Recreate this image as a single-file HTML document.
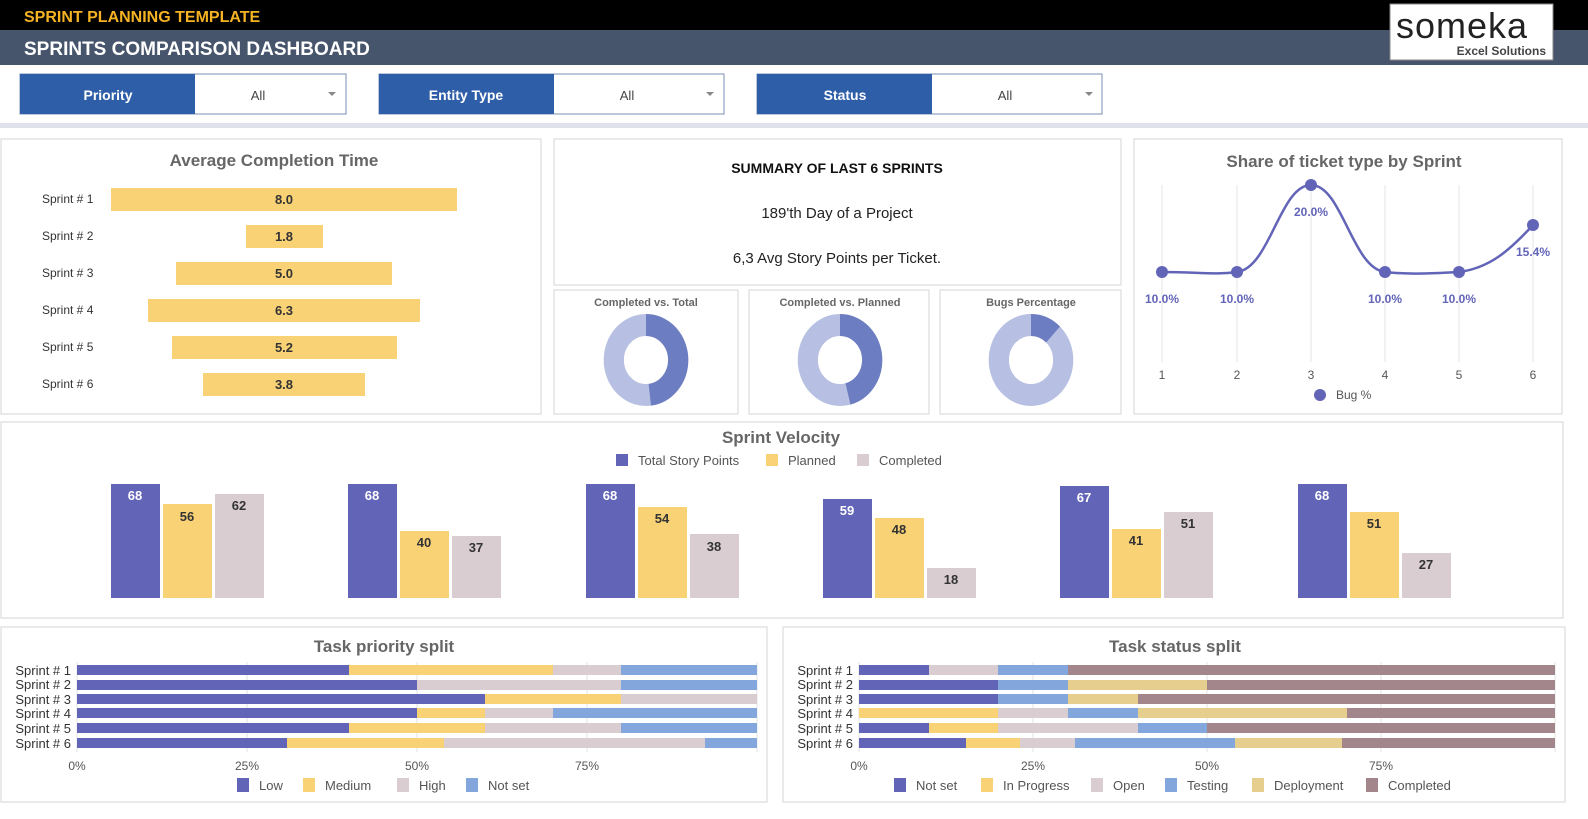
<!DOCTYPE html>
<html><head><meta charset="utf-8"><style>
body{margin:0;width:1588px;height:814px;background:#fff;overflow:hidden;font-family:"Liberation Sans",sans-serif}
svg text{font-family:"Liberation Sans",sans-serif}
</style></head><body>
<svg width="1588" height="814" viewBox="0 0 1588 814" xmlns="http://www.w3.org/2000/svg">
<rect x="0" y="0" width="1588" height="30" fill="#000"/>
<rect x="0" y="30" width="1588" height="35" fill="#46556c"/>
<text x="24" y="22" fill="#f5b324" font-size="16" font-weight="bold">SPRINT PLANNING TEMPLATE</text>
<text x="24" y="55" fill="#fff" font-size="19" font-weight="bold">SPRINTS COMPARISON DASHBOARD</text>
<rect x="1390" y="4" width="163" height="56" fill="#fff" stroke="#888"/>
<text x="1396" y="38" fill="#222" font-size="36" letter-spacing="1">someka</text>
<text x="1546" y="55" fill="#444" font-size="12" font-weight="bold" text-anchor="end">Excel Solutions</text>
<!-- filters -->
<g font-size="14">
<rect x="20" y="74" width="326" height="40" fill="#fff" stroke="#7b8fb8"/><rect x="20" y="74" width="175" height="40" fill="#2f5ea8"/>
<text x="108" y="100" fill="#fff" font-weight="bold" text-anchor="middle">Priority</text><text x="258" y="100" fill="#444" font-size="13" text-anchor="middle">All</text><path d="M328 92l4 4 4-4z" fill="#888"/>
<rect x="379" y="74" width="345" height="40" fill="#fff" stroke="#7b8fb8"/><rect x="379" y="74" width="175" height="40" fill="#2f5ea8"/>
<text x="466" y="100" fill="#fff" font-weight="bold" text-anchor="middle">Entity Type</text><text x="627" y="100" fill="#444" font-size="13" text-anchor="middle">All</text><path d="M706 92l4 4 4-4z" fill="#888"/>
<rect x="757" y="74" width="345" height="40" fill="#fff" stroke="#7b8fb8"/><rect x="757" y="74" width="175" height="40" fill="#2f5ea8"/>
<text x="845" y="100" fill="#fff" font-weight="bold" text-anchor="middle">Status</text><text x="1005" y="100" fill="#444" font-size="13" text-anchor="middle">All</text><path d="M1085 92l4 4 4-4z" fill="#888"/>
</g>
<rect x="0" y="123" width="1588" height="5" fill="#dfe2ea"/>
<!-- panels -->
<g fill="#fff" stroke="#d6d6d6">
<rect x="1" y="139" width="540" height="275"/><rect x="554" y="139" width="567" height="146"/>
<rect x="554" y="290" width="184" height="124"/><rect x="749" y="290" width="180" height="124"/><rect x="940" y="290" width="181" height="124"/>
<rect x="1134" y="139" width="428" height="275"/><rect x="1" y="422" width="1562" height="196"/>
<rect x="1" y="627" width="766" height="175"/><rect x="783" y="627" width="782" height="175"/>
</g>
<!-- avg completion -->
<text x="274" y="166" fill="#666" font-size="17" font-weight="bold" text-anchor="middle">Average Completion Time</text>
<g font-size="12" fill="#333">
<text x="42" y="203">Sprint # 1</text><text x="42" y="240">Sprint # 2</text><text x="42" y="277">Sprint # 3</text><text x="42" y="314">Sprint # 4</text><text x="42" y="351">Sprint # 5</text><text x="42" y="388">Sprint # 6</text>
</g>
<g fill="#f9d276">
<rect x="111" y="188" width="346" height="23"/><rect x="246" y="225" width="77" height="23"/><rect x="176" y="262" width="216" height="23"/>
<rect x="148" y="299" width="272" height="23"/><rect x="172" y="336" width="225" height="23"/><rect x="203" y="373" width="162" height="23"/>
</g>
<g font-size="13" font-weight="bold" fill="#333" text-anchor="middle">
<text x="284" y="204">8.0</text><text x="284" y="241">1.8</text><text x="284" y="278">5.0</text><text x="284" y="315">6.3</text><text x="284" y="352">5.2</text><text x="284" y="389">3.8</text>
</g>
<!-- summary -->
<text x="837" y="173" font-size="14" font-weight="bold" fill="#111" text-anchor="middle">SUMMARY OF LAST 6 SPRINTS</text>
<text x="837" y="218" font-size="15" fill="#222" text-anchor="middle">189'th Day of a Project</text>
<text x="837" y="263" font-size="15" fill="#222" text-anchor="middle">6,3 Avg Story Points per Ticket.</text>
<g font-size="11" font-weight="bold" fill="#666" text-anchor="middle">
<text x="646" y="306">Completed vs. Total</text><text x="840" y="306">Completed vs. Planned</text><text x="1031" y="306">Bugs Percentage</text>
</g>
<g fill="none" stroke-width="22">
<g transform="translate(646,360) scale(0.92,1) rotate(-90)"><circle r="35" stroke="#b7c0e2"/><circle r="35" stroke="#6d7dc1" stroke-dasharray="105.6 300"/></g>
<g transform="translate(840,360) scale(0.92,1) rotate(-90)"><circle r="35" stroke="#b7c0e2"/><circle r="35" stroke="#6d7dc1" stroke-dasharray="101 300"/></g>
<g transform="translate(1031,360) scale(0.92,1) rotate(-90)"><circle r="35" stroke="#b7c0e2"/><circle r="35" stroke="#6d7dc1" stroke-dasharray="26.4 300"/></g>
</g>
<!-- line chart -->
<text x="1344" y="167" fill="#666" font-size="17" font-weight="bold" text-anchor="middle">Share of ticket type by Sprint</text>
<g stroke="#e6e6e6"><path d="M1162 185V362M1237 185V362M1311 185V362M1385 185V362M1459 185V362M1533 185V362"/></g>
<path d="M1162 272C1200 272 1215 275 1237 272C1270 268 1280 185 1311 185C1342 185 1352 268 1385 272C1410 275 1440 273 1459 272C1490 268 1510 250 1533 225" fill="none" stroke="#6264b8" stroke-width="2.5"/>
<g fill="#6264b8"><circle cx="1162" cy="272" r="6"/><circle cx="1237" cy="272" r="6"/><circle cx="1311" cy="185" r="6"/><circle cx="1385" cy="272" r="6"/><circle cx="1459" cy="272" r="6"/><circle cx="1533" cy="225" r="6"/><circle cx="1320" cy="395" r="6"/></g>
<g font-size="12" font-weight="bold" fill="#6264b8" text-anchor="middle">
<text x="1162" y="303">10.0%</text><text x="1237" y="303">10.0%</text><text x="1311" y="216">20.0%</text><text x="1385" y="303">10.0%</text><text x="1459" y="303">10.0%</text><text x="1533" y="256">15.4%</text>
</g>
<g font-size="12" fill="#555" text-anchor="middle"><text x="1162" y="379">1</text><text x="1237" y="379">2</text><text x="1311" y="379">3</text><text x="1385" y="379">4</text><text x="1459" y="379">5</text><text x="1533" y="379">6</text></g>
<text x="1336" y="399" font-size="12" fill="#555">Bug %</text>
<!-- velocity -->
<text x="781" y="443" fill="#666" font-size="17" font-weight="bold" text-anchor="middle">Sprint Velocity</text>
<g font-size="13" fill="#555">
<rect x="616" y="454" width="12" height="12" fill="#6264b8"/><text x="638" y="465">Total Story Points</text>
<rect x="766" y="454" width="12" height="12" fill="#f9d276"/><text x="788" y="465">Planned</text>
<rect x="857" y="454" width="12" height="12" fill="#d9cdd1"/><text x="879" y="465">Completed</text>
</g>
<g id="v" font-size="13" font-weight="bold" text-anchor="middle">
<rect x="111" y="484" width="49" height="114" fill="#6264b8"/><text x="135" y="500" fill="#fff">68</text>
<rect x="163" y="504" width="49" height="94" fill="#f9d276"/><text x="187" y="521" fill="#333">56</text>
<rect x="215" y="494" width="49" height="104" fill="#d9cdd1"/><text x="239" y="510" fill="#333">62</text>
<rect x="348" y="484" width="49" height="114" fill="#6264b8"/><text x="372" y="500" fill="#fff">68</text>
<rect x="400" y="531" width="49" height="67" fill="#f9d276"/><text x="424" y="547" fill="#333">40</text>
<rect x="452" y="536" width="49" height="62" fill="#d9cdd1"/><text x="476" y="552" fill="#333">37</text>
<rect x="586" y="484" width="49" height="114" fill="#6264b8"/><text x="610" y="500" fill="#fff">68</text>
<rect x="638" y="507" width="49" height="91" fill="#f9d276"/><text x="662" y="523" fill="#333">54</text>
<rect x="690" y="534" width="49" height="64" fill="#d9cdd1"/><text x="714" y="551" fill="#333">38</text>
<rect x="823" y="499" width="49" height="99" fill="#6264b8"/><text x="847" y="515" fill="#fff">59</text>
<rect x="875" y="518" width="49" height="80" fill="#f9d276"/><text x="899" y="534" fill="#333">48</text>
<rect x="927" y="568" width="49" height="30" fill="#d9cdd1"/><text x="951" y="584" fill="#333">18</text>
<rect x="1060" y="486" width="49" height="112" fill="#6264b8"/><text x="1084" y="502" fill="#fff">67</text>
<rect x="1112" y="529" width="49" height="69" fill="#f9d276"/><text x="1136" y="545" fill="#333">41</text>
<rect x="1164" y="512" width="49" height="86" fill="#d9cdd1"/><text x="1188" y="528" fill="#333">51</text>
<rect x="1298" y="484" width="49" height="114" fill="#6264b8"/><text x="1322" y="500" fill="#fff">68</text>
<rect x="1350" y="512" width="49" height="86" fill="#f9d276"/><text x="1374" y="528" fill="#333">51</text>
<rect x="1402" y="553" width="49" height="45" fill="#d9cdd1"/><text x="1426" y="569" fill="#333">27</text>
</g>
<!-- priority split -->
<text x="384" y="652" fill="#666" font-size="17" font-weight="bold" text-anchor="middle">Task priority split</text>
<g stroke="#e3e3e3"><path d="M77 662V752M247 662V752M417 662V752M587 662V752M757 662V752"/></g>
<g font-size="13" fill="#333" text-anchor="end">
<text x="71" y="675">Sprint # 1</text><text x="71" y="689">Sprint # 2</text><text x="71" y="704">Sprint # 3</text><text x="71" y="718">Sprint # 4</text><text x="71" y="733">Sprint # 5</text><text x="71" y="748">Sprint # 6</text>
<text x="1
" y="0"></text>
</g>
<g>
<rect x="77" y="665" width="272" height="10" fill="#6264b8"/><rect x="349" y="665" width="204" height="10" fill="#f9d276"/><rect x="553" y="665" width="68" height="10" fill="#d9cdd1"/><rect x="621" y="665" width="136" height="10" fill="#83a6dc"/>
<rect x="77" y="680" width="340" height="10" fill="#6264b8"/><rect x="417" y="680" width="204" height="10" fill="#d9cdd1"/><rect x="621" y="680" width="136" height="10" fill="#83a6dc"/>
<rect x="77" y="694" width="408" height="10" fill="#6264b8"/><rect x="485" y="694" width="136" height="10" fill="#f9d276"/><rect x="621" y="694" width="136" height="10" fill="#d9cdd1"/>
<rect x="77" y="708" width="340" height="10" fill="#6264b8"/><rect x="417" y="708" width="68" height="10" fill="#f9d276"/><rect x="485" y="708" width="68" height="10" fill="#d9cdd1"/><rect x="553" y="708" width="204" height="10" fill="#83a6dc"/>
<rect x="77" y="723" width="272" height="10" fill="#6264b8"/><rect x="349" y="723" width="136" height="10" fill="#f9d276"/><rect x="485" y="723" width="136" height="10" fill="#d9cdd1"/><rect x="621" y="723" width="136" height="10" fill="#83a6dc"/>
<rect x="77" y="738" width="210" height="10" fill="#6264b8"/><rect x="287" y="738" width="157" height="10" fill="#f9d276"/><rect x="444" y="738" width="261" height="10" fill="#d9cdd1"/><rect x="705" y="738" width="52" height="10" fill="#83a6dc"/>
</g>
<g font-size="12" fill="#555" text-anchor="middle"><text x="77" y="770">0%</text><text x="247" y="770">25%</text><text x="417" y="770">50%</text><text x="587" y="770">75%</text></g>
<g font-size="13" fill="#555">
<rect x="237" y="778" width="12" height="14" fill="#6264b8"/><text x="259" y="790">Low</text>
<rect x="303" y="778" width="12" height="14" fill="#f9d276"/><text x="325" y="790">Medium</text>
<rect x="397" y="778" width="12" height="14" fill="#d9cdd1"/><text x="419" y="790">High</text>
<rect x="466" y="778" width="12" height="14" fill="#83a6dc"/><text x="488" y="790">Not set</text>
</g>
<!-- status split -->
<text x="1175" y="652" fill="#666" font-size="17" font-weight="bold" text-anchor="middle">Task status split</text>
<g stroke="#e3e3e3"><path d="M859 662V752M1033 662V752M1207 662V752M1381 662V752M1555 662V752"/></g>
<g font-size="13" fill="#333" text-anchor="end">
<text x="853" y="675">Sprint # 1</text><text x="853" y="689">Sprint # 2</text><text x="853" y="704">Sprint # 3</text><text x="853" y="718">Sprint # 4</text><text x="853" y="733">Sprint # 5</text><text x="853" y="748">Sprint # 6</text>
</g>
<g>
<rect x="859" y="665" width="70" height="10" fill="#6264b8"/><rect x="929" y="665" width="69" height="10" fill="#d9cdd1"/><rect x="998" y="665" width="70" height="10" fill="#83a6dc"/><rect x="1068" y="665" width="487" height="10" fill="#a3868c"/>
<rect x="859" y="680" width="139" height="10" fill="#6264b8"/><rect x="998" y="680" width="70" height="10" fill="#83a6dc"/><rect x="1068" y="680" width="139" height="10" fill="#e6cf8e"/><rect x="1207" y="680" width="348" height="10" fill="#a3868c"/>
<rect x="859" y="694" width="139" height="10" fill="#6264b8"/><rect x="998" y="694" width="70" height="10" fill="#83a6dc"/><rect x="1068" y="694" width="70" height="10" fill="#e6cf8e"/><rect x="1138" y="694" width="417" height="10" fill="#a3868c"/>
<rect x="859" y="708" width="139" height="10" fill="#f9d276"/><rect x="998" y="708" width="70" height="10" fill="#d9cdd1"/><rect x="1068" y="708" width="70" height="10" fill="#83a6dc"/><rect x="1138" y="708" width="209" height="10" fill="#e6cf8e"/><rect x="1347" y="708" width="208" height="10" fill="#a3868c"/>
<rect x="859" y="723" width="70" height="10" fill="#6264b8"/><rect x="929" y="723" width="69" height="10" fill="#f9d276"/><rect x="998" y="723" width="140" height="10" fill="#d9cdd1"/><rect x="1138" y="723" width="69" height="10" fill="#83a6dc"/><rect x="1207" y="723" width="348" height="10" fill="#a3868c"/>
<rect x="859" y="738" width="107" height="10" fill="#6264b8"/><rect x="966" y="738" width="54" height="10" fill="#f9d276"/><rect x="1020" y="738" width="55" height="10" fill="#d9cdd1"/><rect x="1075" y="738" width="160" height="10" fill="#83a6dc"/><rect x="1235" y="738" width="107" height="10" fill="#e6cf8e"/><rect x="1342" y="738" width="213" height="10" fill="#a3868c"/>
</g>
<g font-size="12" fill="#555" text-anchor="middle"><text x="859" y="770">0%</text><text x="1033" y="770">25%</text><text x="1207" y="770">50%</text><text x="1381" y="770">75%</text></g>
<g font-size="13" fill="#555">
<rect x="894" y="778" width="12" height="14" fill="#6264b8"/><text x="916" y="790">Not set</text>
<rect x="981" y="778" width="12" height="14" fill="#f9d276"/><text x="1003" y="790">In Progress</text>
<rect x="1091" y="778" width="12" height="14" fill="#d9cdd1"/><text x="1113" y="790">Open</text>
<rect x="1165" y="778" width="12" height="14" fill="#83a6dc"/><text x="1187" y="790">Testing</text>
<rect x="1252" y="778" width="12" height="14" fill="#e6cf8e"/><text x="1274" y="790">Deployment</text>
<rect x="1366" y="778" width="12" height="14" fill="#a3868c"/><text x="1388" y="790">Completed</text>
</g>
</svg>
</body></html>
